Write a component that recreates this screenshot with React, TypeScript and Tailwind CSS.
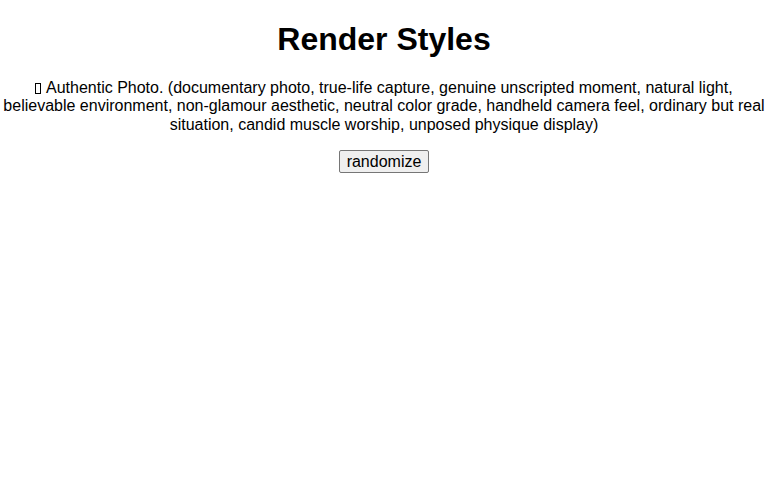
export default function App() {
  return (
    <div className="min-h-screen bg-white text-black text-center font-['Liberation_Sans',Arial,sans-serif] px-[3px]">
      <h1 className="text-[32px] font-bold leading-[37px] pt-[21px] pb-[21px]">Render Styles</h1>
      <p className="text-base leading-[1.15]">
        <span className="inline-block w-[6px] h-[11px] border border-black align-[-1px] mr-[1px]"></span> Authentic Photo. (documentary photo, true-life capture, genuine unscripted moment, natural light,
        believable environment, non-glamour aesthetic, neutral color grade, handheld camera feel, ordinary but real
        situation, candid muscle worship, unposed physique display)
      </p>
      <div className="mt-4">
        <button className="text-base leading-[19px] px-[7px] py-[1px] bg-[#efefef] border border-[#767676] rounded-[2px] text-black">
          randomize
        </button>
      </div>
    </div>
  );
}
